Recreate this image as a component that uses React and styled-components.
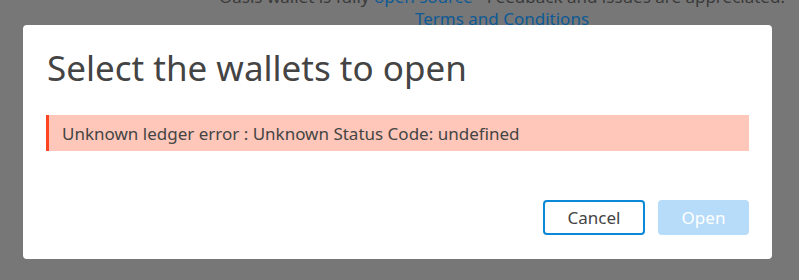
import React from 'react';
import styled, { createGlobalStyle } from 'styled-components';

const GlobalStyle = createGlobalStyle`
  * { box-sizing: border-box; }
  html, body { margin: 0; padding: 0; background: #777; }
  body {
    font-family: "Noto Sans", "Open Sans", sans-serif;
    color: #444;
    overflow: hidden;
  }
`;

// pagina de fondo atenuada (solo se ve el pie)
const DimmedPage = styled.div`
  height: 280px;
  padding-left: 205px;
  background: #777;
`;

const Footer = styled.footer`
  margin-top: -14px;
  text-align: center;
  font-size: 17px;
  line-height: 22px;
  color: #3a3a3a;

  a {
    color: #0d5a96;
    text-decoration: none;
  }
`;

const Overlay = styled.div`
  position: fixed;
  inset: 0;
  display: flex;
  justify-content: center;
  align-items: flex-start;
  padding: 25px 4px 0 0;
`;

const Modal = styled.div`
  width: 749px;
  background: #fff;
  border-radius: 4px;
  padding: 16px 23px 24px;
  display: flex;
  flex-direction: column;
`;

const Title = styled.h1`
  margin: 0 0 0 1px;
  font-size: 35px;
  font-weight: 400;
  line-height: 54px;
  color: #444;
`;

const ErrorBox = styled.div`
  margin-top: 20px;
  height: 36px;
  display: flex;
  align-items: center;
  padding-left: 13px;
  background: #ffc7b9;
  border-left: 3px solid #ff4422;
  font-size: 17px;
  color: #444;
`;

const Actions = styled.div`
  margin-top: 49px;
  display: flex;
  justify-content: flex-end;
  gap: 13px;
`;

const Button = styled.button`
  height: 35px;
  width: ${(p) => p.$w}px;
  font-family: inherit;
  font-size: 17px;
  border-radius: 4px;
  cursor: ${(p) => (p.$primary ? 'default' : 'pointer')};
  border: 2px solid ${(p) => (p.$primary ? 'transparent' : '#0b88d8')};
  background: ${(p) => (p.$primary ? '#b6dcf9' : '#fff')};
  color: ${(p) => (p.$primary ? '#fff' : '#444')};
`;

const App = () => {
  return (
    <>
      <GlobalStyle />
      <DimmedPage>
        <Footer>
          Oasis wallet is fully <a href="#">open source</a> - Feedback and issues are appreciated.
          <br />
          <a href="#">Terms and Conditions</a>
        </Footer>
      </DimmedPage>
      <Overlay>
        <Modal>
          <Title>Select the wallets to open</Title>
          <ErrorBox>Unknown ledger error : Unknown Status Code: undefined</ErrorBox>
          <Actions>
            <Button $w={102}>Cancel</Button>
            <Button $w={91} $primary disabled>Open</Button>
          </Actions>
        </Modal>
      </Overlay>
    </>
  );
};

export default App;
